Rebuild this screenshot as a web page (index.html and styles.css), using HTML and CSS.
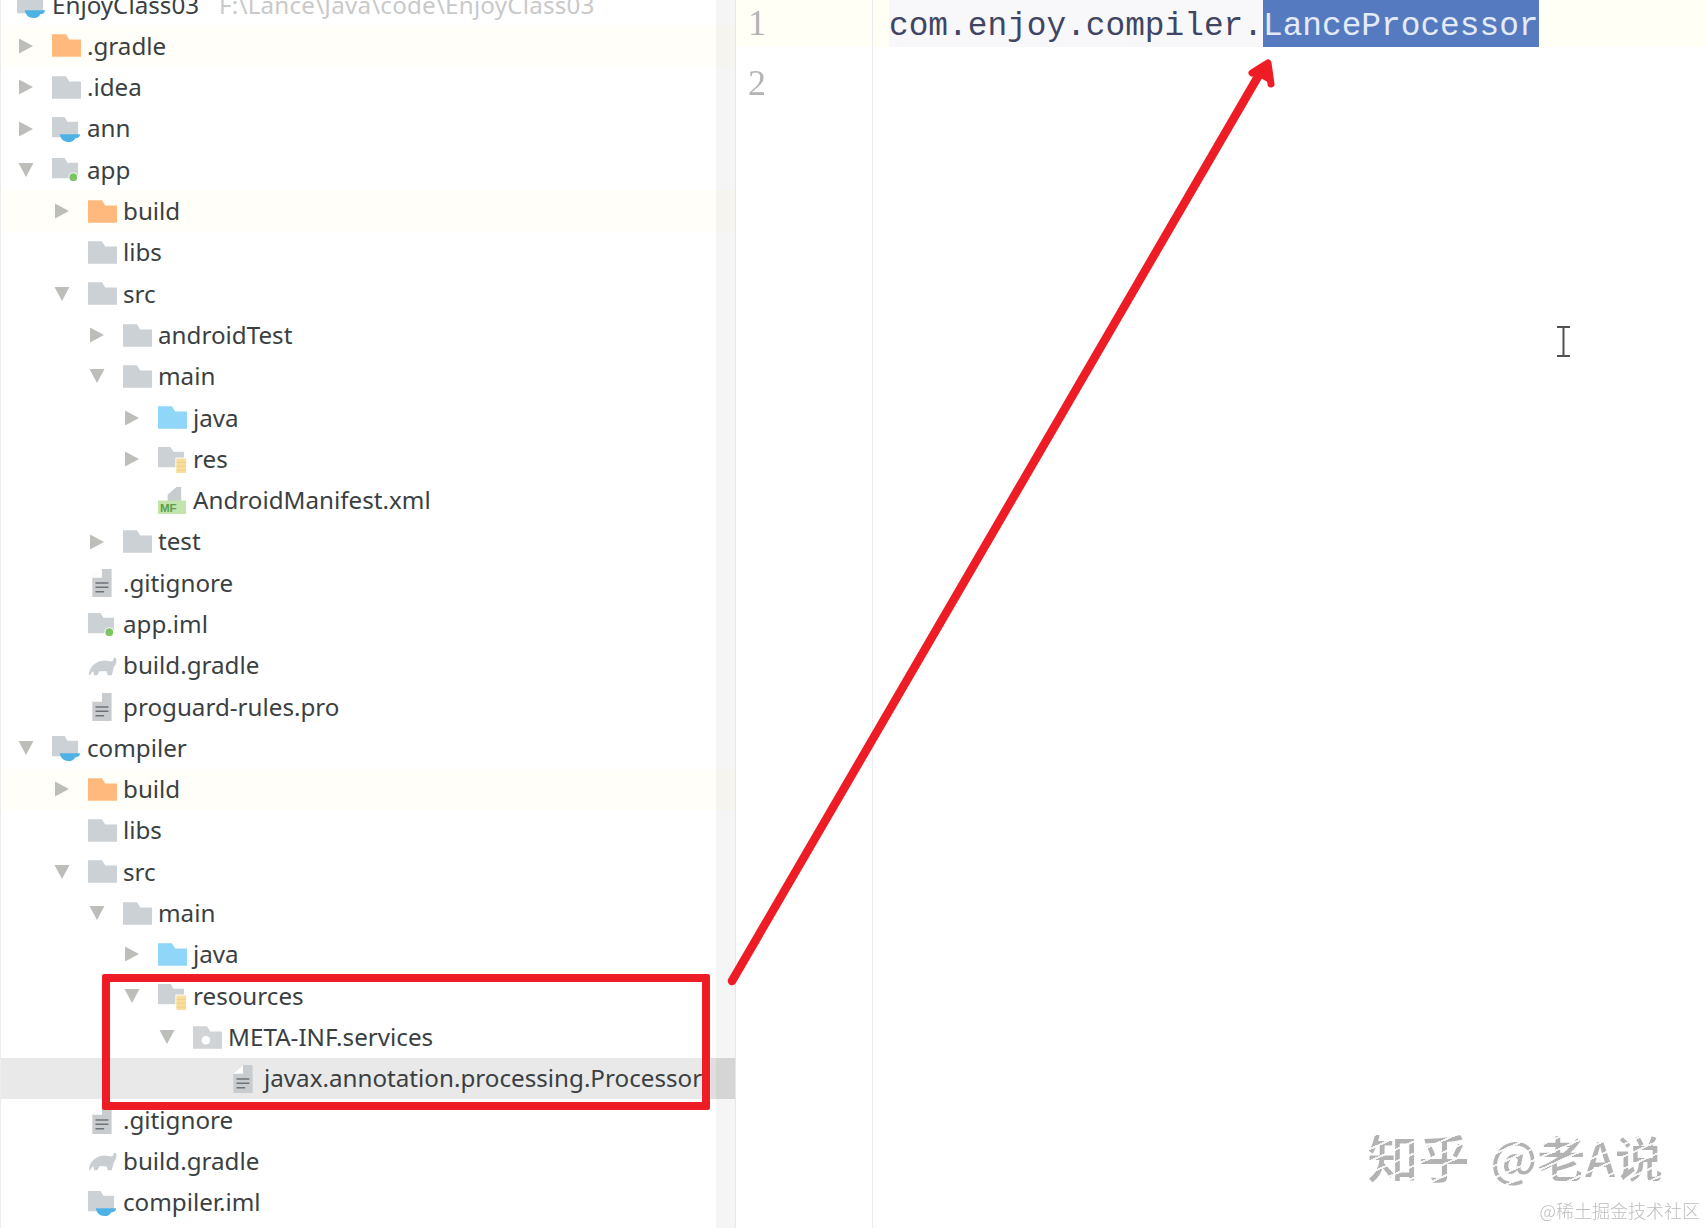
FILE: index.html
```html
<!DOCTYPE html>
<html lang="en">
<head>
<meta charset="utf-8">
<title>EnjoyClass03</title>
<link rel="stylesheet" href="styles.css">
</head>
<body>
<svg class="defs" width="0" height="0" aria-hidden="true">
  <symbol id="arrow-r" viewBox="0 0 16 16"><path d="M1 0.5 15 8 1 15.5Z" fill="#bcbfb9"/></symbol>
  <symbol id="arrow-d" viewBox="0 0 16 16"><path d="M0.5 1H15.500L8 15Z" fill="#bcbfb9"/></symbol>
  <symbol id="folder" viewBox="0 0 27 27"><path d="M0 3H13L16 8H27V24H0Z" fill="currentColor"/></symbol>
  <symbol id="module" viewBox="0 0 30 30"><path d="M0 3H13L16 8H27V24H0Z" fill="#ccd1d5"/><path d="M8 21H29C29 24 27 25 24 25C23 28 20 29 17 29C12 29 9 26 8 21Z" fill="#4fb2e6"/></symbol>
  <symbol id="android" viewBox="0 0 30 30"><path d="M0 3H13L16 8H27V24H0Z" fill="#ccd1d5"/><circle cx="22" cy="23" r="5" fill="#fff"/><circle cx="22" cy="23" r="4" fill="#7dc465"/></symbol>
  <symbol id="res" viewBox="0 0 30 30"><path d="M0 3H13L16 8H27V24H0Z" fill="#ccd1d5"/><path d="M18 14H29V30H18Z" fill="#fff"/><path d="M19 15H29V30H19Z" fill="#f8dd9d"/><path d="M19 19H29M19 23H29M19 27H29" stroke="#eecf86" stroke-width="1"/></symbol>
  <symbol id="pkg" viewBox="0 0 27 27"><path d="M0 3H13L16 8H27V24H0Z" fill="#d0d4d7"/><circle cx="12" cy="16" r="4" fill="#fff"/></symbol>
  <symbol id="file" viewBox="0 0 27 27"><path d="M4 9 13 1H22V27H4Z" fill="#c9ccce"/><path d="M4 9 13 1V9Z" fill="#fff"/><path d="M7 14H19M7 18H19M7 22H15" stroke="#6d7378" stroke-width="1.400"/></symbol>
  <symbol id="gradle" viewBox="0 0 28 27"><path d="M1 23C1 16 6 10 14 9C19 8 22 11 24 9C25 8 24 6 26 6C29 7 27 13 25 15L23 23H19L18 19H11L9 23H6L5 19C3 20 3 23 1 23Z" fill="#c9ced2"/></symbol>
</svg>

<main class="window">
  <aside class="sidebar">
    <div class="tree">
      <div class="row root"><svg class="icon"><use href="#module"/></svg><span class="name">EnjoyClass03</span><span class="path">F:\Lance\Java\code\EnjoyClass03</span></div>
      <div class="row l0 changed"><svg class="tw"><use href="#arrow-r"/></svg><svg class="icon orange"><use href="#folder"/></svg><span class="name">.gradle</span></div>
      <div class="row l0"><svg class="tw"><use href="#arrow-r"/></svg><svg class="icon grey"><use href="#folder"/></svg><span class="name">.idea</span></div>
      <div class="row l0"><svg class="tw"><use href="#arrow-r"/></svg><svg class="icon"><use href="#module"/></svg><span class="name">ann</span></div>
      <div class="row l0"><svg class="tw"><use href="#arrow-d"/></svg><svg class="icon"><use href="#android"/></svg><span class="name">app</span></div>
      <div class="row l1 changed"><svg class="tw"><use href="#arrow-r"/></svg><svg class="icon orange"><use href="#folder"/></svg><span class="name">build</span></div>
      <div class="row l1"><span class="tw"></span><svg class="icon grey"><use href="#folder"/></svg><span class="name">libs</span></div>
      <div class="row l1"><svg class="tw"><use href="#arrow-d"/></svg><svg class="icon grey"><use href="#folder"/></svg><span class="name">src</span></div>
      <div class="row l2"><svg class="tw"><use href="#arrow-r"/></svg><svg class="icon grey"><use href="#folder"/></svg><span class="name">androidTest</span></div>
      <div class="row l2"><svg class="tw"><use href="#arrow-d"/></svg><svg class="icon grey"><use href="#folder"/></svg><span class="name">main</span></div>
      <div class="row l3"><svg class="tw"><use href="#arrow-r"/></svg><svg class="icon blue"><use href="#folder"/></svg><span class="name">java</span></div>
      <div class="row l3"><svg class="tw"><use href="#arrow-r"/></svg><svg class="icon"><use href="#res"/></svg><span class="name">res</span></div>
      <div class="row l3"><span class="tw"></span><svg class="icon" viewBox="0 0 30 30"><path d="M10 9 19 1H24V16H10Z" fill="#c9ccce"/><path d="M0 15H29V29H0Z" fill="#c3e4ac"/><text class="mf" x="2" y="27">MF</text></svg><span class="name">AndroidManifest.xml</span></div>
      <div class="row l2"><svg class="tw"><use href="#arrow-r"/></svg><svg class="icon grey"><use href="#folder"/></svg><span class="name">test</span></div>
      <div class="row l1"><span class="tw"></span><svg class="icon"><use href="#file"/></svg><span class="name">.gitignore</span></div>
      <div class="row l1"><span class="tw"></span><svg class="icon"><use href="#android"/></svg><span class="name">app.iml</span></div>
      <div class="row l1"><span class="tw"></span><svg class="icon"><use href="#gradle"/></svg><span class="name">build.gradle</span></div>
      <div class="row l1"><span class="tw"></span><svg class="icon"><use href="#file"/></svg><span class="name">proguard-rules.pro</span></div>
      <div class="row l0"><svg class="tw"><use href="#arrow-d"/></svg><svg class="icon"><use href="#module"/></svg><span class="name">compiler</span></div>
      <div class="row l1 changed"><svg class="tw"><use href="#arrow-r"/></svg><svg class="icon orange"><use href="#folder"/></svg><span class="name">build</span></div>
      <div class="row l1"><span class="tw"></span><svg class="icon grey"><use href="#folder"/></svg><span class="name">libs</span></div>
      <div class="row l1"><svg class="tw"><use href="#arrow-d"/></svg><svg class="icon grey"><use href="#folder"/></svg><span class="name">src</span></div>
      <div class="row l2"><svg class="tw"><use href="#arrow-d"/></svg><svg class="icon grey"><use href="#folder"/></svg><span class="name">main</span></div>
      <div class="row l3"><svg class="tw"><use href="#arrow-r"/></svg><svg class="icon blue"><use href="#folder"/></svg><span class="name">java</span></div>
      <div class="row l3"><svg class="tw"><use href="#arrow-d"/></svg><svg class="icon"><use href="#res"/></svg><span class="name">resources</span></div>
      <div class="row l4"><svg class="tw"><use href="#arrow-d"/></svg><svg class="icon"><use href="#pkg"/></svg><span class="name">META-INF.services</span></div>
      <div class="row l5 selected"><span class="tw"></span><svg class="icon"><use href="#file"/></svg><span class="name">javax.annotation.processing.Processor</span></div>
      <div class="row l1"><span class="tw"></span><svg class="icon"><use href="#file"/></svg><span class="name">.gitignore</span></div>
      <div class="row l1"><span class="tw"></span><svg class="icon"><use href="#gradle"/></svg><span class="name">build.gradle</span></div>
      <div class="row l1"><span class="tw"></span><svg class="icon"><use href="#module"/></svg><span class="name">compiler.iml</span></div>
    </div>
    <div class="scroll-strip"></div>
  </aside>

  <section class="editor">
    <div class="line current">
      <div class="num">1</div>
      <div class="code"><span class="plain">com.enjoy.compiler.</span><span class="sel">LanceProcessor</span></div>
    </div>
    <div class="line second">
      <div class="num">2</div>
      <div class="code"></div>
    </div>
    <div class="gutter-fill"><div class="gutter-col"></div></div>
  </section>
</main>

<div class="callout-box"></div>
<svg class="overlay" viewBox="0 0 1706 1228" aria-hidden="true">
  <path class="shaft" d="M732 981 1263 68"/>
  <path class="head" d="M1252 73 1268 63 1271 84"/>
  <path class="ibeam" d="M1557 327H1570M1563.500 327V356M1557 356H1570"/>
</svg>
<div class="marks">
  <div class="zhihu"><span class="zh-logo">知乎</span><span class="zh-user">@老A说</span></div>
  <div class="juejin">@稀土掘金技术社区</div>
</div>
</body>
</html>
```
FILE: styles.css
```css
* { box-sizing: border-box; }
html, body { margin: 0; height: 100%; }
body {
  width: 1706px;
  height: 1228px;
  overflow: hidden;
  position: relative;
  background: #fff;
  color: #3b3f42;
  font-family: "Noto Sans", "Noto Sans CJK SC", sans-serif;
}
.defs { position: absolute; }
.window { display: flex; height: 1228px; filter: blur(0.5px); }

.sidebar {
  position: relative;
  flex: 0 0 736px;
  border-left: 1px solid #ededed;
  border-right: 1px solid #e6e6e6;
  overflow: hidden;
  background: #fff;
}
.tree { margin-top: -16px; }
.row {
  position: relative;
  display: flex;
  align-items: center;
  height: 41.31px;
  font-size: 24.2px;
  white-space: nowrap;
}
.changed { background: #fffef8; }
.selected { background: #e9e9e9; }
.selected::after {
  content: "";
  position: absolute;
  top: 0;
  right: 0;
  bottom: 0;
  width: 24px;
  background: #dedede;
}
.root { padding-left: 16px; }
.l0 { padding-left: 17px; }
.l1 { padding-left: 53px; }
.l2 { padding-left: 88px; }
.l3 { padding-left: 123px; }
.l4 { padding-left: 158px; }
.l5 { padding-left: 194px; }
.tw { flex: 0 0 16px; width: 16px; height: 16px; margin-right: 18px; }
.icon { flex: 0 0 29px; width: 29px; height: 29px; margin-right: 6px; overflow: visible; }
.orange { color: #ffb97d; }
.grey { color: #ccd1d5; }
.blue { color: #90d6f8; }
.mf { font: 700 12px "Liberation Sans", sans-serif; fill: #5c9f4a; }
.name { line-height: 1; }
.path { margin-left: 20px; color: #c9c9c9; letter-spacing: 0.2px; }
.scroll-strip {
  position: absolute;
  top: 0;
  right: 0;
  bottom: 0;
  width: 19px;
  background: rgba(0, 0, 0, 0.04);
}

.editor { flex: 1; display: flex; flex-direction: column; min-width: 0; }
.line { display: flex; flex: 0 0 72px; min-height: 0; }
.line.current { flex-basis: 47px; overflow: hidden; background: #fffff6; }
.num {
  flex: 0 0 137px;
  padding-left: 12px;
  border-right: 1px solid #ececec;
  font: 36px/72px "Liberation Serif", serif;
  color: #b4b4b4;
}
.line.current .num { line-height: 47px; }
.code {
  height: 47px;
  padding-left: 16px;
  font: 32.8px/54px "Liberation Mono", monospace;
  color: #3f4563;
  white-space: pre;
}
.plain { background: #f8f8fb; display: inline-block; height: 47px; }
.sel { background: #557ac0; color: #e4ebf7; display: inline-block; height: 47px; }
.gutter-fill { flex: 1; display: flex; }
.gutter-col { flex: 0 0 137px; border-right: 1px solid #ececec; }

.callout-box {
  position: absolute;
  left: 102px;
  top: 974px;
  width: 608px;
  height: 136px;
  border: 8px solid #ee1c25;
  border-radius: 2px;
}
.overlay { position: absolute; inset: 0; width: 1706px; height: 1228px; fill: none; }
.shaft { stroke: #ee1c25; stroke-width: 8.500; stroke-linecap: round; }
.head { stroke: #ee1c25; fill: #ee1c25; stroke-width: 7; stroke-linejoin: round; stroke-linecap: round; }
.ibeam { stroke: #333; stroke-width: 2; opacity: 0.85; }

.marks {
  position: absolute;
  right: 6px;
  bottom: 6px;
  display: flex;
  flex-direction: column;
  align-items: flex-end;
  font-family: "Noto Sans CJK SC", sans-serif;
}
.zhihu {
  display: flex;
  align-items: center;
  gap: 21px;
  margin-right: 37px;
  line-height: 60px;
  font-weight: 500;
  color: transparent;
  background: repeating-linear-gradient(-24deg, #b3b3b3 0 9px, #f4f4f4 9px 11px);
  -webkit-background-clip: text;
  background-clip: text;
}
.zh-logo { font-size: 51px; }
.zh-user { font-size: 48px; }
.juejin { margin-top: 12px; font-size: 18px; line-height: 24px; color: #bdbdbd; font-weight: 300; }
```
